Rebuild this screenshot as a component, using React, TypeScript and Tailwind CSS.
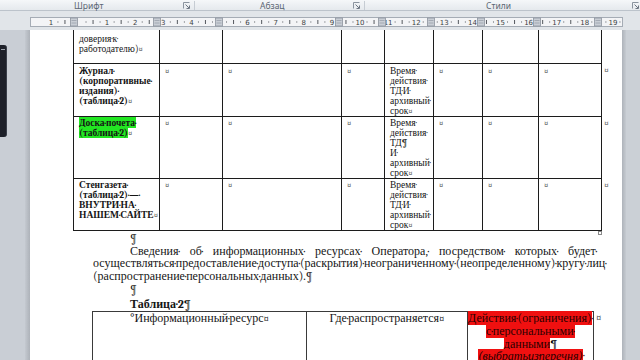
import React from "react";

function Launcher() {
  return (
    <svg width="7" height="7" viewBox="0 0 7 7" className="shrink-0">
      <path d="M0.5 6.5 V0.5 H6.5" fill="none" stroke="#8a939e" strokeWidth="1" />
      <path d="M2.5 2.5 L6 6" stroke="#6d7682" strokeWidth="1" />
      <path d="M6.5 3.5 V6.5 H3.5" fill="none" stroke="#6d7682" strokeWidth="1" />
    </svg>
  );
}

function Ruler() {
  const origin = 49;
  const cm = 28.1;
  const parts: React.ReactNode[] = [];
  for (let n = -1; n <= 19; n++) {
    const x = origin + n * cm;
    if (n !== 0) {
      parts.push(
        <text key={"t" + n} x={x} y={7.5} fontSize="7" textAnchor="middle" fill="#3c3f44" fontFamily="DejaVu Sans, sans-serif">
          {Math.abs(n)}
        </text>
      );
    }
    parts.push(<rect key={"a" + n} x={x + cm * 0.25 - 0.5} y={4.5} width={1} height={1} fill="#55595f" />);
    parts.push(<rect key={"b" + n} x={x + cm * 0.5 - 0.5} y={3} width={1} height={4} fill="#55595f" />);
    parts.push(<rect key={"c" + n} x={x + cm * 0.75 - 0.5} y={4.5} width={1} height={1} fill="#55595f" />);
  }
  const markers = [44, 127, 189, 309, 352, 401, 451, 507, 568];
  return (
    <svg width="593" height="10" viewBox="0 0 593 10">
      <rect x="0.5" y="0.5" width="592" height="9" fill="#f3f4f6" stroke="#a5acb5" />
      {parts}
      {markers.map((m) => (
        <g key={m}>
          <rect x={m - 3.5} y={1} width={7} height={8} fill="#c9ced5" stroke="#8d949e" strokeWidth="0.8" />
          <line x1={m - 2.5} y1={3.5} x2={m + 2.5} y2={3.5} stroke="#9aa1ab" strokeWidth="0.8" />
          <line x1={m - 2.5} y1={6} x2={m + 2.5} y2={6} stroke="#9aa1ab" strokeWidth="0.8" />
        </g>
      ))}
    </svg>
  );
}

const C = () => <span className="text-[8px] leading-none text-[#333] font-normal">¤</span>;

function Lines({ lines, bold }: { lines: React.ReactNode[]; bold?: boolean }) {
  return (
    <div className={"flex flex-col whitespace-nowrap " + (bold ? "font-bold" : "")}>
      {lines.map((l, i) => (
        <div key={i} className="h-[10px]">{l}</div>
      ))}
    </div>
  );
}

const td = "border border-[#1c1c1c] align-top pl-[5px] pr-[1px] pt-[1px] overflow-hidden";

function EndMark() {
  return <td className="align-top pl-[2px] pt-[1px] text-[9px] leading-[10px] text-[#444]">¤</td>;
}

const timeLines = ["Время·", "действия·", <>ТД·И·</>, "архивный·", <>срок<C /></>];

export default function App() {
  return (
    <div className="w-[640px] h-[360px] overflow-hidden flex flex-col bg-[#dde1e6]">
      {/* Ribbon group labels */}
      <div className="h-[11px] pt-[1px] flex bg-gradient-to-b from-[#f5f7f9] to-[#e5e9ed] border-b border-[#bcc3cb] text-[8.5px] leading-[9px] text-[#5b6673] font-sans">
        <div className="w-[195px] flex items-start border-r border-[#c6ccd3]">
          <span className="ml-[74px]">Шрифт</span>
          <span className="ml-auto mr-[4px] mt-[1px]"><Launcher /></span>
        </div>
        <div className="w-[170px] flex items-start border-r border-[#c6ccd3]">
          <span className="ml-[65px]">Абзац</span>
          <span className="ml-auto mr-[4px] mt-[1px]"><Launcher /></span>
        </div>
        <div className="flex-1 flex items-start">
          <span className="ml-[121px]">Стили</span>
          <span className="ml-auto mr-[1px] mt-[1px]"><Launcher /></span>
        </div>
      </div>
      {/* Ruler area */}
      <div className="h-[19px] flex items-start pt-[6px] bg-[#e1e5e9]">
        <div className="w-[30px]" />
        <Ruler />
      </div>
      {/* Body */}
      <div className="flex-1 flex min-h-0">
        <div className="w-[30px] relative flex bg-[#c9ced5]">
          <div className="absolute left-0 top-[15px] w-[7px] h-[92px] bg-[#1d2029] rounded-r-[3px] border-r border-[#3a3f4a]">
            <div className="mt-[4px] ml-[1px] w-[4px] h-[1px] bg-[#9aa0aa]" />
          </div>
          <div className="ml-auto w-[5px] bg-gradient-to-r from-[#c4c9d0] to-[#adb2b9]" />
        </div>
        <div className="w-[592px] bg-white overflow-hidden relative text-[#151515] font-serif">
          {/* Table 1 */}
          <div className="ml-[43px] mt-[-1px] relative">
            <table className="border-collapse table-fixed text-[9.5px] leading-[10px]">
              <colgroup>
                <col className="w-[84px]" />
                <col className="w-[63px]" />
                <col className="w-[119px]" />
                <col className="w-[43px]" />
                <col className="w-[49px]" />
                <col className="w-[49px]" />
                <col className="w-[56px]" />
                <col className="w-[63px]" />
                <col className="w-[14px]" />
              </colgroup>
              <tbody>
                <tr className="h-[34px]">
                  <td className={td + " !pt-[4px]"}>
                    <Lines lines={["доверия·к·", <>работодателю)<C /></>]} />
                  </td>
                  <td className={td} />
                  <td className={td} />
                  <td className={td} />
                  <td className={td} />
                  <td className={td} />
                  <td className={td} />
                  <td className={td} />
                  <td />
                </tr>
                <tr className="h-[53px]">
                  <td className={td + " !pt-[2px]"}>
                    <Lines bold lines={["Журнал·", "(корпоративные·", "издания)·", <>(таблица·2)<C /></>]} />
                  </td>
                  <td className={td + " !pt-[2px]"}><C /></td>
                  <td className={td + " !pt-[2px]"}><C /></td>
                  <td className={td + " !pt-[2px]"}><C /></td>
                  <td className={td + " !pt-[2px]"}><Lines lines={timeLines} /></td>
                  <td className={td + " !pt-[2px]"}><C /></td>
                  <td className={td + " !pt-[2px]"}><C /></td>
                  <td className={td + " !pt-[2px]"}><C /></td>
                  <EndMark />
                </tr>
                <tr className="h-[62px]">
                  <td className={td}>
                    <Lines
                      bold
                      lines={[
                        <span className="bg-[#22e622]">Доска·почета·</span>,
                        <><span className="bg-[#22e622]">(таблица·2)</span><C /></>,
                      ]}
                    />
                  </td>
                  <td className={td}><C /></td>
                  <td className={td}><C /></td>
                  <td className={td}><C /></td>
                  <td className={td}>
                    <Lines lines={["Время·", "действия·", <>ТД<span className="font-bold">¶</span></>, "И·", "архивный·", <>срок<C /></>]} />
                  </td>
                  <td className={td}><C /></td>
                  <td className={td}><C /></td>
                  <td className={td}><C /></td>
                  <EndMark />
                </tr>
                <tr className="h-[51px]">
                  <td className={td}>
                    <Lines bold lines={["Стенгазета·", "(таблица·2)·—·", "ВНУТРИ·НА·", <>НАШЕМ·САЙТЕ<C /></>]} />
                  </td>
                  <td className={td}><C /></td>
                  <td className={td}><C /></td>
                  <td className={td}><C /></td>
                  <td className={td}><Lines lines={timeLines} /></td>
                  <td className={td}><C /></td>
                  <td className={td}><C /></td>
                  <td className={td}><C /></td>
                  <EndMark />
                </tr>
              </tbody>
            </table>
            <div className="absolute left-[525px] bottom-[-4px] w-[4px] h-[4px] border border-[#8a8a8a] bg-white" />
          </div>

          {/* Paragraph */}
          <div className="ml-[63px] w-[504px] text-[12px] leading-[12.7px] mt-[1px]">
            <div className="pl-[37px]">¶</div>
            <div className="flex justify-between pl-[37px] whitespace-nowrap">
              {["Сведения·", "об·", "информационных·", "ресурсах·", "Оператора,·", "посредством·", "которых·", "будет·"].map((w) => (
                <span key={w}>{w}</span>
              ))}
            </div>
            <div className="flex justify-between whitespace-nowrap">
              {["осуществляться·", "предоставление·", "доступа·", "(раскрытия)·", "неограниченному·", "(неопределенному)·", "кругу·", "лиц·"].map((w) => (
                <span key={w}>{w}</span>
              ))}
            </div>
            <div className="whitespace-nowrap">(распространение·персональных·данных).¶</div>
            <div className="pl-[37px]">¶</div>
            <div className="pl-[37px] font-bold mt-[2px]">Таблица·2¶</div>
          </div>

          {/* Table 2 */}
          <div className="ml-[62px] mt-[1px]">
            <table className="border-collapse table-fixed text-[12px] leading-[12.7px]">
              <colgroup>
                <col className="w-[214px]" />
                <col className="w-[161px]" />
                <col className="w-[126px]" />
                <col className="w-[14px]" />
              </colgroup>
              <tbody>
                <tr className="h-[70px]">
                  <td className="border border-[#3a3a3a] align-top text-center pt-0">
                    °Информационный·ресурс<span className="text-[10px]">¤</span>
                  </td>
                  <td className="border border-[#3a3a3a] align-top text-center pt-0">
                    Где·распространяется<span className="text-[10px]">¤</span>
                  </td>
                  <td className="border border-[#3a3a3a] align-top text-center pt-0 text-[#2a0000] whitespace-nowrap">
                    <div><span className="bg-[#f01010]">Действия·(ограничения)</span>·</div>
                    <div><span className="bg-[#f01010]">с·персональными·</span></div>
                    <div><span className="bg-[#f01010]">данными</span><span className="text-black font-bold">¶</span></div>
                    <div className="italic"><span className="bg-[#f01010]">(выбрать·из·перечня)</span>·</div>
                  </td>
                  <td className="align-top pl-[2px] text-[10px] text-[#444]">¤</td>
                </tr>
              </tbody>
            </table>
          </div>
        </div>
        <div className="flex-1 flex bg-[#cbd0d6]">
          <div className="w-[4px] bg-gradient-to-r from-[#aeb3ba] to-[#c6cbd1]" />
        </div>
      </div>
    </div>
  );
}
